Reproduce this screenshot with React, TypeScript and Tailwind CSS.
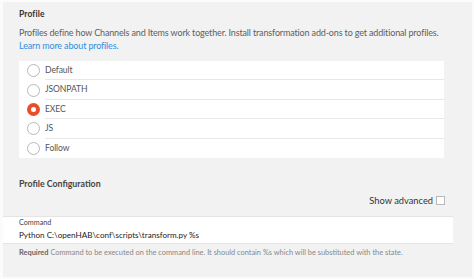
const profiles = ["Default", "JSONPATH", "EXEC", "JS", "Follow"];

function Radio({ checked }: { checked: boolean }) {
  if (checked) {
    return (
      <span className="flex h-[13px] w-[13px] shrink-0 items-center justify-center rounded-full bg-[#e5502a]">
        <span className="h-[5px] w-[5px] rounded-full bg-white" />
      </span>
    );
  }
  return <span className="h-[13px] w-[13px] shrink-0 rounded-full border border-[#b8b8b8] bg-white" />;
}

export default function App() {
  return (
    <div className="h-[279px] w-[474px] bg-[#fbfbfb] pl-[3px] pt-[2px] font-['Lato',sans-serif]">
      <div className="h-[275px] w-[469px] bg-[#f2f2f2] pt-[5px]">
        <div className="pl-[16px] text-[8.5px] font-bold leading-[14px] tracking-[0.1px] text-[#333]">Profile</div>
        <p className="mt-[4.5px] whitespace-nowrap pl-[16px] text-[9px] leading-[13px] tracking-[-0.15px] text-[#5e5e5e]">
          Profiles define how Channels and Items work together. Install transformation add-ons to get additional profiles.
          <span className="block text-[#2e8fe0]">Learn more about profiles.</span>
        </p>
        <div className="ml-[16px] mt-[9.5px] w-[425px] bg-white">
          {profiles.map((p, i) => (
            <div key={p} className="flex h-[19.4px] items-center pl-[8px]">
              <Radio checked={p === "EXEC"} />
              <div
                className={
                  i < profiles.length - 1
                    ? "ml-[5px] flex h-full flex-1 items-center border-b border-[#e8e8e8] text-[8.6px] tracking-[-0.1px] text-[#555]"
                    : "ml-[5px] flex h-full flex-1 items-center text-[8.6px] tracking-[-0.1px] text-[#555]"
                }
              >
                {p}
              </div>
            </div>
          ))}
        </div>
        <div className="mt-[18px] pl-[16px] text-[8.8px] font-bold leading-[16px] text-[#444]">Profile Configuration</div>
        <div className="mt-[1px] flex items-center justify-end gap-[3px] pr-[27px] text-[9.3px] leading-[16px] text-[#333]">
          Show advanced
          <span className="h-[9px] w-[9px] border border-[#b8b8b8] bg-white" />
        </div>
        <div className="mt-[7px] w-[450px] border-y border-[#e4e4e4] bg-white pl-[16px] pt-[1px]">
          <div className="text-[7.2px] leading-[10px] text-[#444]">Command</div>
          <div className="text-[8.1px] leading-[15px] text-[#222]">Python C:\openHAB\conf\scripts\transform.py %s</div>
        </div>
        <div className="mt-[2px] whitespace-nowrap pl-[16px] text-[7.4px] leading-[14px] text-[#888]">
          <span className="font-bold text-[#666]">Required</span> Command to be executed on the command line. It should contain %s which will be substituted with the state.
        </div>
      </div>
    </div>
  );
}
